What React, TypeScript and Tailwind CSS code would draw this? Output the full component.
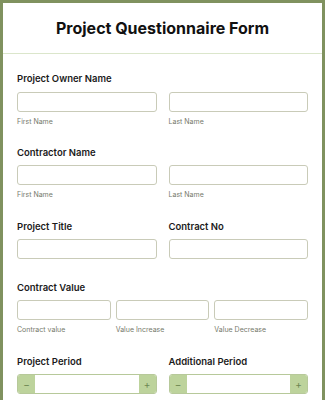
import React from "react";

const font = { fontFamily: "Inter, 'Noto Sans', sans-serif" };

function Input() {
  return <div className="h-[20px] w-full rounded-[3px] border border-[#c9cbb8] bg-white" />;
}

function Sub({ children }: { children: React.ReactNode }) {
  return <div className="mt-[5px] text-[7px] leading-[10px] text-[#767a6c]">{children}</div>;
}

function Label({ children }: { children: React.ReactNode }) {
  return <div className="text-[9.5px] font-semibold leading-[12px] text-[#1b1b1b]">{children}</div>;
}

function Spinner() {
  return (
    <div className="flex h-[20px] w-full overflow-hidden rounded-[3px] border border-[#b7c99a] bg-white">
      <div className="flex w-[17px] items-center justify-center bg-[#bdd39c] text-[10px] leading-none text-[#6e8752]">−</div>
      <div className="flex-1" />
      <div className="flex w-[17px] items-center justify-center bg-[#bdd39c] text-[10px] leading-none text-[#6e8752]">+</div>
    </div>
  );
}

export default function App() {
  return (
    <div className="h-[400px] w-[325px] overflow-hidden bg-[#80925f] pl-[3px] pr-[3px] pt-[3px]" style={font}>
      <div className="h-full w-full bg-white">
        <div className="flex h-[51px] items-center justify-center border-b border-[#dbe6cb]">
          <div className="text-[16px] font-bold leading-none text-[#111]">Project Questionnaire Form</div>
        </div>
        <div className="px-[14px]">
          {/* Section 1 */}
          <div className="pt-[19px]">
            <Label>Project Owner Name</Label>
            <div className="mt-[7px] grid grid-cols-2 gap-[12px]">
              <div>
                <Input />
                <Sub>First Name</Sub>
              </div>
              <div>
                <Input />
                <Sub>Last Name</Sub>
              </div>
            </div>
          </div>
          {/* Section 2 */}
          <div className="pt-[20px]">
            <Label>Contractor Name</Label>
            <div className="mt-[6px] grid grid-cols-2 gap-[12px]">
              <div>
                <Input />
                <Sub>First Name</Sub>
              </div>
              <div>
                <Input />
                <Sub>Last Name</Sub>
              </div>
            </div>
          </div>
          {/* Section 3 */}
          <div className="grid grid-cols-2 gap-[12px] pt-[21px]">
            <div>
              <Label>Project Title</Label>
              <div className="mt-[6px]">
                <Input />
              </div>
            </div>
            <div>
              <Label>Contract No</Label>
              <div className="mt-[6px]">
                <Input />
              </div>
            </div>
          </div>
          {/* Section 4 */}
          <div className="pt-[23px]">
            <Label>Contract Value</Label>
            <div className="mt-[6px] grid grid-cols-3 gap-[5px]">
              <div>
                <Input />
                <Sub>Contract value</Sub>
              </div>
              <div>
                <Input />
                <Sub>Value Increase</Sub>
              </div>
              <div>
                <Input />
                <Sub>Value Decrease</Sub>
              </div>
            </div>
          </div>
          {/* Section 5 */}
          <div className="grid grid-cols-2 gap-[12px] pt-[21px]">
            <div>
              <Label>Project Period</Label>
              <div className="mt-[6px]">
                <Spinner />
              </div>
            </div>
            <div>
              <Label>Additional Period</Label>
              <div className="mt-[6px]">
                <Spinner />
              </div>
            </div>
          </div>
        </div>
      </div>
    </div>
  );
}
